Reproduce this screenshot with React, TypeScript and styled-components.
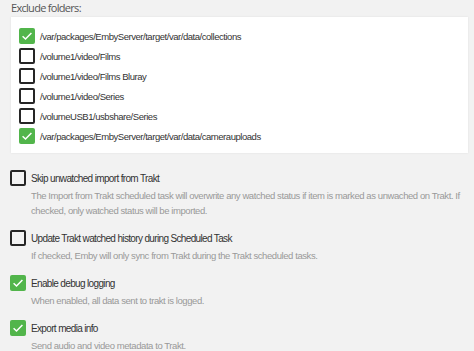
import React from "react";
import styled, { createGlobalStyle } from "styled-components";

const Global = createGlobalStyle`
  html, body { margin: 0; padding: 0; background: #f2f2f2; }
  body { font-family: "Liberation Sans", Arial, sans-serif; color: #333; }
`;

const Page = styled.div`
  padding: 0 6px 0 10px;
  display: flex;
  flex-direction: column;
`;

const Title = styled.div`
  font-family: "Open Sans", "Liberation Sans", sans-serif;
  font-size: 11px;
  line-height: 15px;
  letter-spacing: -0.7px;
  margin-left: 1px;
  color: #555;
`;

const Panel = styled.div`
  margin-left: 1px;
  margin-top: 2px;
  background: #fff;
  box-shadow: 0 0 2px rgba(0, 0, 0, 0.08);
  padding: 11px 8px 9px 8px;
  display: flex;
  flex-direction: column;
  gap: 4px;
`;

const FolderRow = styled.label`
  display: flex;
  align-items: center;
  gap: 5px;
  height: 16px;
  font-size: 9.5px;
  letter-spacing: -0.46px;
  color: #333;
`;

const Box = styled.span<{ $checked: boolean }>`
  flex: none;
  width: 16px;
  height: 16px;
  box-sizing: border-box;
  border-radius: 2px;
  display: flex;
  align-items: center;
  justify-content: center;
  background: ${(p) => (p.$checked ? "#52b54b" : "transparent")};
  border: ${(p) => (p.$checked ? "none" : "2px solid #262626")};
`;

const Options = styled.div`
  display: flex;
  flex-direction: column;
  gap: 12px;
  margin-top: 17px;
`;

const Option = styled.div`
  display: flex;
  flex-direction: column;
`;

const OptionLabel = styled.label`
  display: flex;
  align-items: center;
  gap: 5px;
  height: 16px;
  font-size: 10px;
  letter-spacing: -0.65px;
  color: #333;
`;

const Desc = styled.div`
  margin-left: 21px;
  margin-top: 2px;
  font-size: 9.5px;
  line-height: 15px;
  letter-spacing: -0.42px;
  color: #999;
`;

const Check = ({ checked }: { checked: boolean }) => (
  <Box $checked={checked}>
    {checked && (
      <svg width="12" height="12" viewBox="0 0 12 12">
        <polyline
          points="1.6,6.3 4.5,9 10.4,2.9"
          fill="none"
          stroke="#fff"
          strokeWidth="1.5"
        />
      </svg>
    )}
  </Box>
);

const folders = [
  { path: "/var/packages/EmbyServer/target/var/data/collections", checked: true },
  { path: "/volume1/video/Films", checked: false },
  { path: "/volume1/video/Films Bluray", checked: false },
  { path: "/volume1/video/Series", checked: false },
  { path: "/volumeUSB1/usbshare/Series", checked: false },
  { path: "/var/packages/EmbyServer/target/var/data/camerauploads", checked: true },
];

const options = [
  {
    label: "Skip unwatched import from Trakt",
    desc: "The Import from Trakt scheduled task will overwrite any watched status if item is marked as unwached on Trakt. If checked, only watched status will be imported.",
    checked: false,
  },
  {
    label: "Update Trakt watched history during Scheduled Task",
    desc: "If checked, Emby will only sync from Trakt during the Trakt scheduled tasks.",
    checked: false,
  },
  {
    label: "Enable debug logging",
    desc: "When enabled, all data sent to trakt is logged.",
    checked: true,
  },
  {
    label: "Export media info",
    desc: "Send audio and video metadata to Trakt.",
    checked: true,
  },
];

export default function App() {
  return (
    <>
      <Global />
      <Page>
        <Title>Exclude folders:</Title>
        <Panel>
          {folders.map((f) => (
            <FolderRow key={f.path}>
              <Check checked={f.checked} />
              {f.path}
            </FolderRow>
          ))}
        </Panel>
        <Options>
          {options.map((o) => (
            <Option key={o.label}>
              <OptionLabel>
                <Check checked={o.checked} />
                {o.label}
              </OptionLabel>
              <Desc>{o.desc}</Desc>
            </Option>
          ))}
        </Options>
      </Page>
    </>
  );
}
